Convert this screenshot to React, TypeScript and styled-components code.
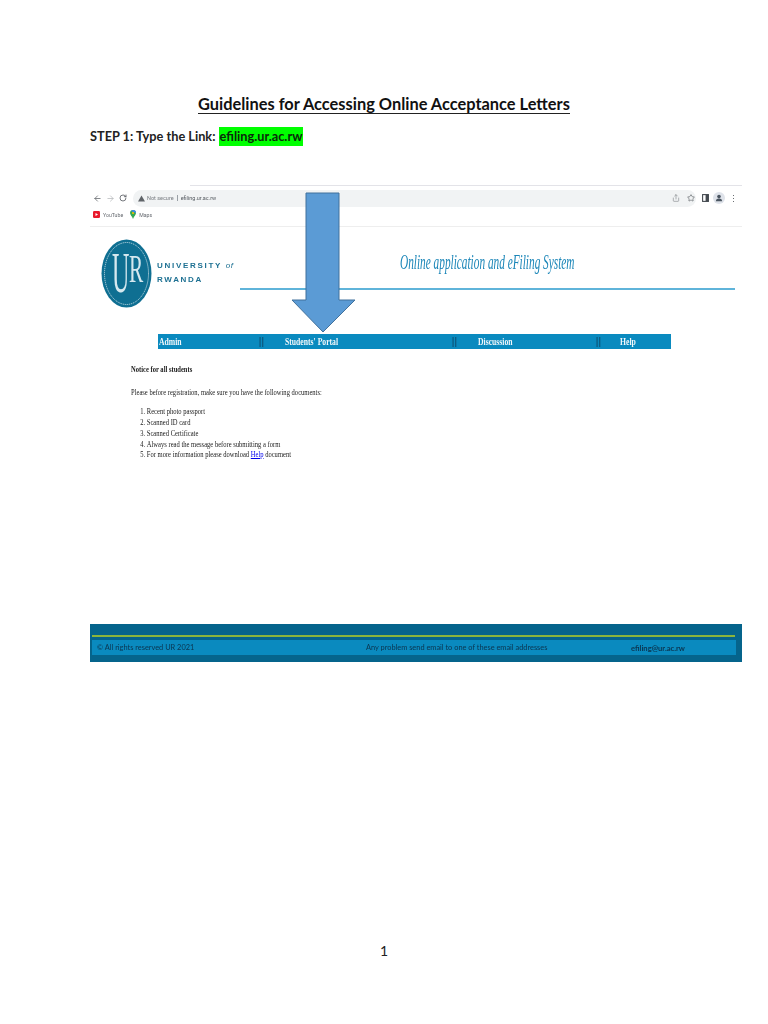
import { createGlobalStyle, styled } from 'styled-components';
import { ArrowLeft, ArrowRight, RotateCw, Share, Star } from 'lucide-react';

const GlobalStyle = createGlobalStyle`
    html, body { margin: 0; padding: 0; background: #ffffff; }
    body { font-family: "Liberation Sans", Arial, sans-serif; }
`

const colors = {
    barBlue: '#0a8abf',
    deepBlue: '#05648c',
    lineBlue: '#5fb4da',
    footText: '#0b3550',
    arrow: '#5b9bd5',
    arrowEdge: '#41719c',
}

const menu = ['Admin', "Students' Portal", 'Discussion', 'Help'];
const docs = ['Recent photo passport', 'Scanned ID card', 'Scanned Certificate', 'Always read the message before submitting a form'];

function Logo() {
    return (
        <svg width="51" height="69" viewBox="0 0 51 69">
            <ellipse cx="25.5" cy="34.5" rx="25" ry="34" fill="#0f6f92" />
            <ellipse cx="25.5" cy="34.5" rx="22" ry="31" fill="none" stroke="#b9d6e0" strokeWidth="1" strokeDasharray="1.2 0.8" />
            <text transform="translate(11 53) scale(0.43 1)" fontFamily="Liberation Serif, serif" fontSize="56" fill="#d5e8ef">U</text>
            <text transform="translate(28 43) scale(0.52 1)" fontFamily="Liberation Serif, serif" fontSize="41" fill="#d5e8ef">R</text>
        </svg>
    )
}

function Arrow() {
    return (
        <svg width="66" height="142" viewBox="0 0 66 142">
            <polygon
                points="15,1 48,1 48,108 64,108 32,140 1,108 15,108"
                fill={colors.arrow}
                stroke={colors.arrowEdge}
                strokeWidth="1"
            />
        </svg>
    )
}

function WarnIcon() {
    return (
        <svg width="7" height="7" viewBox="0 0 9 8">
            <polygon points="4.5,0 9,8 0,8" fill="#5f6368" />
        </svg>
    )
}

function YoutubeIcon() {
    return (
        <svg width="7" height="7" viewBox="0 0 7 7">
            <rect width="7" height="7" rx="1.2" fill="#e8192c" />
            <polygon points="2.5,2 5,3.5 2.5,5" fill="#ffffff" />
        </svg>
    )
}

function PinIcon() {
    return (
        <svg width="6" height="9" viewBox="0 0 6 9">
            <path d="M3 0a3 3 0 0 1 3 3c0 2-2 3-3 6-1-3-3-4-3-6a3 3 0 0 1 3-3z" fill="#34a853" />
            <path d="M3 0a3 3 0 0 1 3 3L1 1z" fill="#4285f4" />
            <circle cx="3" cy="3" r="1.1" fill="#fbbc04" />
        </svg>
    )
}

function ReaderIcon() {
    return (
        <svg width="7" height="8" viewBox="0 0 7 8">
            <rect x="0.6" y="0.6" width="5.8" height="6.8" fill="none" stroke="#444a50" strokeWidth="1.1" />
            <rect x="3.6" y="0.6" width="2.8" height="6.8" fill="#444a50" />
        </svg>
    )
}

function ProfileIcon() {
    return (
        <svg width="12" height="12" viewBox="0 0 12 12">
            <circle cx="6" cy="6" r="6" fill="#dfe3ea" />
            <circle cx="6" cy="4.6" r="1.8" fill="#4a5560" />
            <path d="M2.8 9.2c.4-2 1.6-2.6 3.2-2.6s2.8.6 3.2 2.6z" fill="#4a5560" />
        </svg>
    )
}

function App() {
    return (
        <Page>
            <GlobalStyle />
            <Title>Guidelines for Accessing Online Acceptance Letters</Title>
            <Step>STEP 1: Type the Link: <Mark>efiling.ur.ac.rw</Mark></Step>
            <Shot>
                <Blurred>
                    <TopEdge />
                    <Toolbar>
                        <ArrowLeft size={9} color="#5f6368" />
                        <ArrowRight size={9} color="#b5b8bb" />
                        <RotateCw size={8} color="#5f6368" strokeWidth={2.6} />
                        <Omnibox>
                            <WarnIcon />
                            <NotSecure>Not secure</NotSecure>
                            <UrlText>efiling.ur.ac.rw</UrlText>
                            <OmniIcons>
                                <Share size={8} color="#8a8d91" />
                                <Star size={8} color="#5f6368" />
                            </OmniIcons>
                        </Omnibox>
                        <ToolIcons>
                            <ReaderIcon />
                            <ProfileIcon />
                            <Dots>⋮</Dots>
                        </ToolIcons>
                    </Toolbar>
                    <Bookmarks>
                        <YoutubeIcon />
                        <BookmarkName>YouTube</BookmarkName>
                        <PinIcon />
                        <BookmarkName>Maps</BookmarkName>
                    </Bookmarks>
                    <Banner>
                        <Logo />
                        <Brand>
                            <BrandLine>UNIVERSITY <i>of</i></BrandLine>
                            <BrandLine>RWANDA</BrandLine>
                        </Brand>
                        <BannerRight>
                            <SystemName>Online application and eFiling System</SystemName>
                        </BannerRight>
                    </Banner>
                    <Menu>
                        {menu.map((item, index) => (
                            <MenuCell key={item} $first={index === 0}>
                                <MenuLabel>{item}</MenuLabel>
                                {index < menu.length - 1 && <Sep $last={index === 2}>||</Sep>}
                            </MenuCell>
                        ))}
                    </Menu>
                    <Notice>
                        <NoticeHead>Notice for all students</NoticeHead>
                        <NoticeText>Please before registration, make sure you have the following documents:</NoticeText>
                        <DocList>
                            {docs.map((item) => <li key={item}>{item}</li>)}
                            <li>For more information please download <HelpLink>Help</HelpLink> document</li>
                        </DocList>
                    </Notice>
                    <Footer>
                        <FooterLine />
                        <FooterBar>
                            <span>© All rights reserved UR 2021</span>
                            <span>Any problem send email to one of these email addresses</span>
                            <strong>efiling@ur.ac.rw</strong>
                        </FooterBar>
                    </Footer>
                </Blurred>
                <ArrowBox><Arrow /></ArrowBox>
            </Shot>
            <PageNumber>1</PageNumber>
        </Page>
    )
}

const Page = styled.div`
    width: 768px;
    height: 1024px;
    padding-top: 95px;
    box-sizing: border-box;
    overflow: hidden;
    background: #ffffff;
    font-family: Lato, "Liberation Sans", sans-serif;
    color: #111111;
`
const Title = styled.h1`
    width: fit-content;
    margin: 0 auto 0 198px;
    font-size: 16.4px;
    line-height: 18px;
    font-weight: 700;
    border-bottom: 1px solid #222222;
    white-space: nowrap;
`
const Step = styled.div`
    margin: 13px 0 0 90px;
    font-size: 12.75px;
    line-height: 19px;
    font-weight: 700;
    color: #222222;
`
const Mark = styled.span`
    background: #00ff00;
    padding: 1px 1px 2px;
    color: #0a2a0a;
`
const Shot = styled.div`
    position: relative;
    width: 652px;
    height: 477px;
    margin: 39px 0 0 90px;
`
const Blurred = styled.div`
    height: 100%;
    display: flex;
    flex-direction: column;
    filter: blur(0.45px);
`
const TopEdge = styled.div`
    height: 1px;
    margin-left: 100px;
    background: #e3e3e8;
`
const Toolbar = styled.div`
    height: 20px;
    margin-top: 2px;
    padding: 0 4px 0 3px;
    display: flex;
    align-items: center;
    gap: 4px;
`
const Omnibox = styled.div`
    flex: 1;
    height: 17px;
    margin: 0 2px 0 2px;
    padding: 0 1px 0 5px;
    display: flex;
    align-items: center;
    border-radius: 9px;
    background: #f1f3f4;
    font-family: Roboto, sans-serif;
    font-size: 5.5px;
`
const NotSecure = styled.span`
    margin-left: 2px;
    padding-right: 3px;
    border-right: 1px solid #9aa0a6;
    color: #777b80;
`
const UrlText = styled.span`
    margin-left: 3px;
    color: #555a60;
`
const OmniIcons = styled.div`
    margin-left: auto;
    display: flex;
    gap: 7px;
`
const ToolIcons = styled.div`
    display: flex;
    align-items: center;
    gap: 4px;
`
const Dots = styled.span`
    font-size: 9px;
    line-height: 9px;
    color: #5f6368;
`
const Bookmarks = styled.div`
    height: 18px;
    margin-top: 1px;
    padding: 0 0 6px 3px;
    display: flex;
    align-items: center;
    gap: 3px;
    border-bottom: 1px solid #eeeeee;
    box-sizing: border-box;
`
const BookmarkName = styled.span`
    margin-right: 4px;
    font-family: Roboto, sans-serif;
    font-size: 5.2px;
    color: #666a70;
`
const Banner = styled.div`
    height: 107px;
    padding: 12px 7px 0 11px;
    display: flex;
    align-items: flex-start;
    box-sizing: border-box;
`
const Brand = styled.div`
    margin: 20px 0 0 5px;
    width: 83px;
`
const BrandLine = styled.div`
    font-family: "Liberation Sans", sans-serif;
    font-size: 8px;
    line-height: 14px;
    font-weight: 700;
    letter-spacing: 1.7px;
    color: #1d7092;
    white-space: nowrap;
    i {
        font-weight: 400;
        letter-spacing: 0.4px;
    }
`
const BannerRight = styled.div`
    flex: 1;
    height: 48px;
    margin-top: 1px;
    padding-left: 160px;
    border-bottom: 2px solid ${colors.lineBlue};
    display: flex;
    align-items: flex-start;
`
const SystemName = styled.span`
    margin-top: 10px;
    font-family: "Liberation Serif", serif;
    font-style: italic;
    font-size: 20px;
    line-height: 24px;
    color: #1b86b8;
    white-space: nowrap;
    transform: scaleX(0.565);
    transform-origin: left center;
`
const Menu = styled.div`
    width: 513px;
    height: 15px;
    margin-left: 68px;
    display: grid;
    grid-template-columns: 127px 193px 142px 51px;
    background: ${colors.barBlue};
    font-family: "Liberation Serif", serif;
    font-size: 9.6px;
    font-weight: 700;
    color: #f2f8fb;
`
const MenuCell = styled.div<{ $first: boolean }>`
    display: flex;
    align-items: center;
    justify-content: space-between;
    padding-left: ${({ $first }) => ($first ? 1 : 0)}px;
    white-space: nowrap;
`
const MenuLabel = styled.span`
    display: inline-block;
    transform: scaleX(0.8);
    transform-origin: left center;
`
const Sep = styled.span<{ $last: boolean }>`
    margin-right: ${({ $last }) => ($last ? 19 : 21)}px;
    font-family: "Liberation Sans", sans-serif;
    font-size: 10px;
    color: #0d3f5c;
    font-weight: 400;
`
const Notice = styled.div`
    margin: 16px 0 0 41px;
    font-family: "Liberation Serif", serif;
    font-size: 8.1px;
    line-height: 10.7px;
    color: #222222;
    transform: scaleX(0.81);
    transform-origin: left top;
    white-space: nowrap;
`
const NoticeHead = styled.div`
    font-weight: 700;
`
const NoticeText = styled.div`
    margin-top: 12px;
`
const DocList = styled.ol`
    margin: 9px 0 0;
    padding: 0 0 0 19.5px;
`
const HelpLink = styled.span`
    color: #0000ee;
    text-decoration: underline;
`
const Footer = styled.div`
    margin-top: auto;
    height: 38px;
    padding: 11px 6px 0 2px;
    box-sizing: border-box;
    background: ${colors.deepBlue};
`
const FooterLine = styled.div`
    height: 2px;
    margin-right: 1px;
    background: #8ab53c;
`
const FooterBar = styled.div`
    height: 15px;
    margin-top: 3px;
    padding-left: 5px;
    display: grid;
    grid-template-columns: 269px 265px 1fr;
    align-items: center;
    background: ${colors.barBlue};
    font-family: Lato, sans-serif;
    font-size: 7.4px;
    color: ${colors.footText};
    white-space: nowrap;
    strong {
        font-size: 7.6px;
        font-weight: 700;
    }
`
const ArrowBox = styled.div`
    position: absolute;
    left: 201px;
    top: 7px;
    line-height: 0;
`
const PageNumber = styled.div`
    margin: 280px 0 0;
    text-align: center;
    font-size: 14px;
    line-height: 17px;
    color: #222222;
`
export default App;
